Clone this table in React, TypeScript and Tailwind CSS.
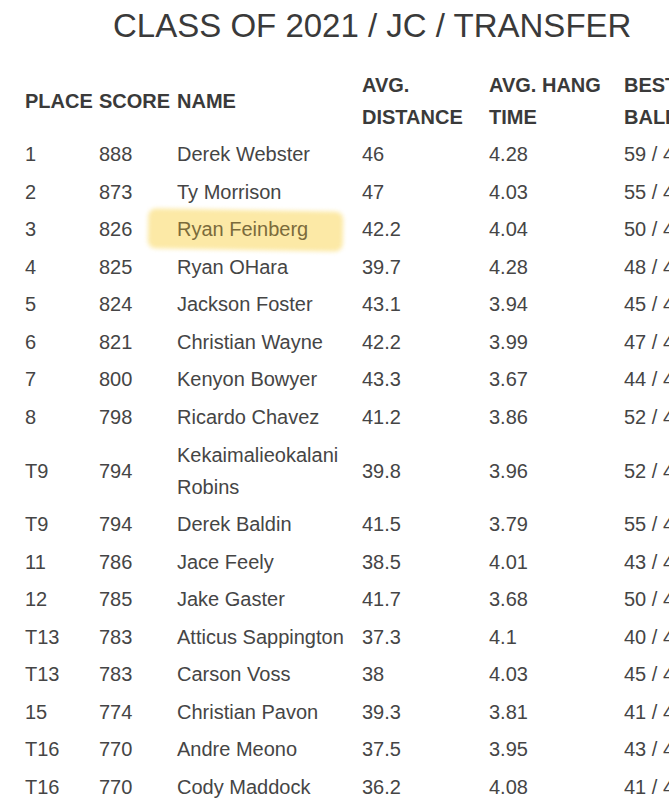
const rows: [string, string, string, string, string, string][] = [
  ["1", "888", "Derek Webster", "46", "4.28", "59 / 46"],
  ["2", "873", "Ty Morrison", "47", "4.03", "55 / 47"],
  ["3", "826", "Ryan Feinberg", "42.2", "4.04", "50 / 44"],
  ["4", "825", "Ryan OHara", "39.7", "4.28", "48 / 41"],
  ["5", "824", "Jackson Foster", "43.1", "3.94", "45 / 43"],
  ["6", "821", "Christian Wayne", "42.2", "3.99", "47 / 44"],
  ["7", "800", "Kenyon Bowyer", "43.3", "3.67", "44 / 43"],
  ["8", "798", "Ricardo Chavez", "41.2", "3.86", "52 / 42"],
  ["T9", "794", "Kekaimalieokalani Robins", "39.8", "3.96", "52 / 41"],
  ["T9", "794", "Derek Baldin", "41.5", "3.79", "55 / 42"],
  ["11", "786", "Jace Feely", "38.5", "4.01", "43 / 40"],
  ["12", "785", "Jake Gaster", "41.7", "3.68", "50 / 42"],
  ["T13", "783", "Atticus Sappington", "37.3", "4.1", "40 / 41"],
  ["T13", "783", "Carson Voss", "38", "4.03", "45 / 40"],
  ["15", "774", "Christian Pavon", "39.3", "3.81", "41 / 41"],
  ["T16", "770", "Andre Meono", "37.5", "3.95", "43 / 40"],
  ["T16", "770", "Cody Maddock", "36.2", "4.08", "41 / 40"],
];

const cell = "py-[2.78px] align-middle text-left leading-[32px]";

export default function App() {
  return (
    <div
      className="w-[669px] h-[798px] overflow-hidden bg-white"
      style={{ fontFamily: '"Liberation Sans", Arial, sans-serif' }}
    >
      {/* Title */}
      <h1 className="pt-[6px] pl-[113px] text-[33px] leading-[40px] font-normal text-[#3a3a3a] whitespace-nowrap">
        CLASS OF 2021 / JC / TRANSFER
      </h1>

      {/* Table, wider than the window: last column is cut at the edge */}
      <div className="mt-[20px] pl-[25px]">
        <table className="table-fixed border-collapse w-[800px] text-[20px]">
          <colgroup>
            <col className="w-[74px]" />
            <col className="w-[78px]" />
            <col className="w-[185px]" />
            <col className="w-[127px]" />
            <col className="w-[135px]" />
            <col className="w-[201px]" />
          </colgroup>
          <thead>
            <tr className="font-bold text-[#3a3a3a]">
              <th className={`${cell} font-bold`}>PLACE</th>
              <th className={`${cell} font-bold`}>SCORE</th>
              <th className={`${cell} font-bold`}>NAME</th>
              <th className={`${cell} font-bold`}>
                AVG.
                <br />
                DISTANCE
              </th>
              <th className={`${cell} font-bold whitespace-nowrap`}>
                AVG. HANG
                <br />
                TIME
              </th>
              <th className={`${cell} font-bold`}>
                BEST
                <br />
                BALL
              </th>
            </tr>
          </thead>
          <tbody className="text-[#454545]">
            {rows.map((r, i) => (
              <tr key={i}>
                <td className={cell}>{r[0]}</td>
                <td className={cell}>{r[1]}</td>
                <td className={cell}>
                  {r[2] === "Ryan Feinberg" ? (
                    <span className="relative inline-block">
                      {/* marker highlight */}
                      <span className="absolute left-[-29px] right-[-35px] top-[-3px] bottom-[-5px] rounded-[8px] bg-[#fce9a6] blur-[2px] rotate-[1deg]" />
                      <span className="relative text-[#7b6b3b]">{r[2]}</span>
                    </span>
                  ) : (
                    r[2]
                  )}
                </td>
                <td className={cell}>{r[3]}</td>
                <td className={cell}>{r[4]}</td>
                <td className={`${cell} whitespace-nowrap`}>{r[5]}</td>
              </tr>
            ))}
          </tbody>
        </table>
      </div>
    </div>
  );
}
